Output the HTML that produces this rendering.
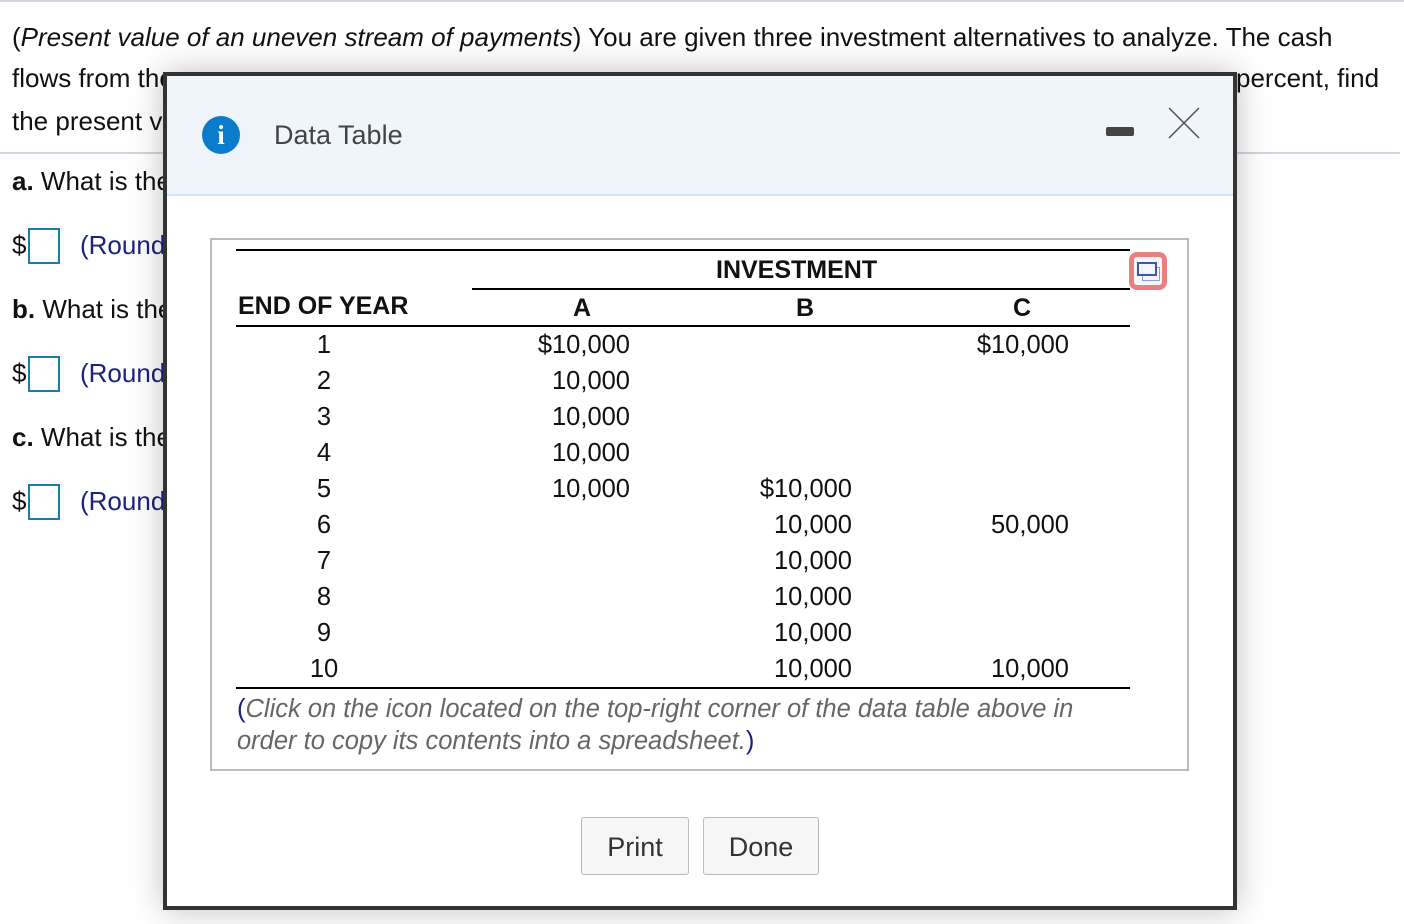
<!DOCTYPE html>
<html><head><style>
body{margin:0;width:1404px;height:924px;overflow:hidden;background:#fff;font-family:"Liberation Sans",Arial,sans-serif;color:#111;position:relative}
.t{position:absolute;font-size:26px;white-space:nowrap}
.box{position:absolute;width:32px;height:36px;border:2px solid #1a7fa8;background:#fff;box-sizing:border-box}
.rd{color:#1a237e}
#modal{position:absolute;left:163px;top:72px;width:1074px;height:838px;border:4px solid #333;box-sizing:border-box;background:#fff;box-shadow:0 0 30px rgba(0,0,0,.25)}
#hdr{position:absolute;left:0;top:0;right:0;height:118px;background:#f0f5fc;border-bottom:2px solid #cfe4f7}
.c{position:absolute;font-size:25px;white-space:nowrap}
.ln{position:absolute;height:2px;background:#000}
.btn{position:absolute;top:744px;height:58px;border:1px solid #bbb;border-radius:3px;background:#f6f6f6;font-size:27px;color:#333;text-align:center;line-height:58px;box-sizing:border-box}
</style></head><body>
<div style="position:absolute;left:0;top:0;width:1404px;height:2px;background:#d0d4e0"></div>
<div class="t" style="left:12px;top:22px">(<i>Present value of an uneven stream of payments</i>) You are given three investment alternatives to analyze. The cash</div>
<div class="t" style="left:12px;top:63px">flows from the</div>
<div class="t" style="left:1236px;top:63px">percent, find</div>
<div class="t" style="left:12px;top:106px">the present v</div>
<div style="position:absolute;left:0;top:152px;width:1400px;height:2px;background:#d0d4e0"></div>
<div class="t" style="left:12px;top:166px"><b>a.</b> What is the</div>
<div class="t" style="left:12px;top:230px">$</div><div class="box" style="left:28px;top:228px"></div><div class="t rd" style="left:80px;top:230px">(Round</div>
<div class="t" style="left:12px;top:294px"><b>b.</b> What is the</div>
<div class="t" style="left:12px;top:358px">$</div><div class="box" style="left:28px;top:356px"></div><div class="t rd" style="left:80px;top:358px">(Round</div>
<div class="t" style="left:12px;top:422px"><b>c.</b> What is the</div>
<div class="t" style="left:12px;top:486px">$</div><div class="box" style="left:28px;top:484px"></div><div class="t rd" style="left:80px;top:486px">(Round</div>

<div id="modal">
 <div id="hdr">
  <div style="position:absolute;left:35px;top:40px;width:38px;height:38px;border-radius:50%;background:#0b7ccc;color:#fff;font:bold 27px 'Liberation Serif',serif;text-align:center;line-height:38px">i</div>
  <div style="position:absolute;left:107px;top:44px;font-size:27px;color:#444">Data Table</div>
  <div style="position:absolute;left:939px;top:51px;width:28px;height:9px;border-radius:2px;background:#444"></div>
  <svg style="position:absolute;left:1000px;top:30px" width="34" height="34"><path d="M2 2L32 32M32 2L2 32" stroke="#555" stroke-width="1.5"/></svg>
 </div>
 <div style="position:absolute;left:43px;top:162px;width:979px;height:533px;border:2px solid #bbb;box-sizing:border-box">
 </div>
 <div style="position:absolute;left:962px;top:176px;width:38px;height:38px;border-radius:8px;background:#e88080">
  <div style="position:absolute;left:5px;top:5px;width:28px;height:28px;background:#f4f6fb;border-radius:3px"></div>
  <div style="position:absolute;left:13px;top:15px;width:16px;height:12px;border:1px solid #889be0"></div>
  <div style="position:absolute;left:8px;top:10px;width:16px;height:10px;border:2px solid #3d55b5;background:#f4f6fb"></div>
 </div>
</div>
<div class="ln" style="left:236px;top:249px;width:894px"></div>
<div class="c" style="left:716px;top:256px;font-weight:bold">INVESTMENT</div>
<div class="ln" style="left:472px;top:288px;width:658px"></div>
<div class="c" style="left:238px;top:292px;font-weight:bold">END OF YEAR</div>
<div class="c" style="left:573px;top:294px;font-weight:bold">A</div>
<div class="c" style="left:796px;top:294px;font-weight:bold">B</div>
<div class="c" style="left:1013px;top:294px;font-weight:bold">C</div>
<div class="ln" style="left:236px;top:325px;width:894px"></div>
<div style="position:absolute;left:236px;top:327px;width:894px;font-size:25.5px;line-height:36px">
 <div style="position:absolute;left:0;width:176px;text-align:center">1<br>2<br>3<br>4<br>5<br>6<br>7<br>8<br>9<br>10</div>
 <div style="position:absolute;right:500px;text-align:right">$10,000<br>10,000<br>10,000<br>10,000<br>10,000</div>
 <div style="position:absolute;right:278px;text-align:right"><br><br><br><br>$10,000<br>10,000<br>10,000<br>10,000<br>10,000<br>10,000</div>
 <div style="position:absolute;right:61px;text-align:right">$10,000<br><br><br><br><br>50,000<br><br><br><br>10,000</div>
</div>
<div class="ln" style="left:236px;top:687px;width:894px"></div>
<div style="position:absolute;left:237px;top:693px;font-size:25.5px;font-style:italic;color:#666;line-height:32px;width:870px"><span class="rd" style="font-style:normal">(</span>Click on the icon located on the top-right corner of the data table above in order to copy its contents into a spreadsheet.<span class="rd" style="font-style:normal">)</span></div>
<div class="btn" style="left:581px;top:817px;width:108px">Print</div>
<div class="btn" style="left:703px;top:817px;width:116px">Done</div>
</body></html>
